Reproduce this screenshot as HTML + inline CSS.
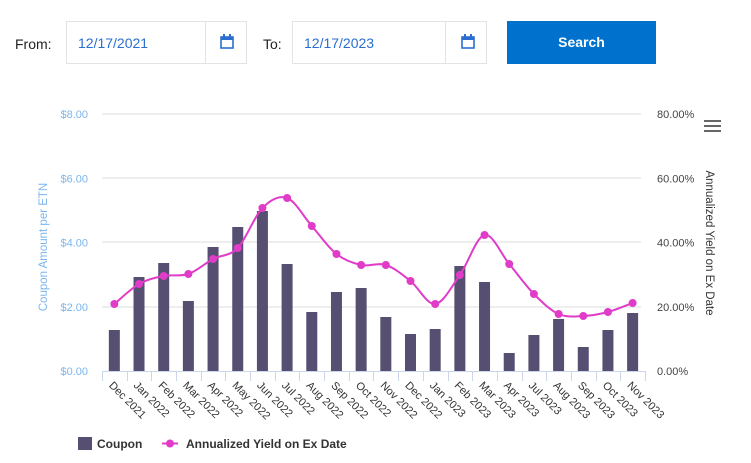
<!DOCTYPE html>
<html><head><meta charset="utf-8"><style>
body{margin:0;background:#fff;width:751px;height:463px;overflow:hidden;font-family:"Liberation Sans",sans-serif;position:relative}
.lbl{position:absolute;font-size:14px;color:#222;top:36px}
.box{position:absolute;top:21px;height:43px;border:1px solid #e3e3e3;box-sizing:border-box;background:#fff}
.box span{position:absolute;left:11px;top:13px;font-size:14px;color:#2a6fd0}
.cal{position:absolute;top:0;right:0;width:40px;height:41px;border-left:1px solid #e3e3e3}
.btn{position:absolute;left:507px;top:21px;width:149px;height:43px;background:#0072ce;color:#fff;font-weight:bold;font-size:14px;text-align:center;line-height:43px}
svg text{font-family:"Liberation Sans","DejaVu Sans",sans-serif}
</style></head><body>
<div class="lbl" style="left:15px">From:</div>
<div class="box" style="left:66px;width:181px"><span>12/17/2021</span><div class="cal"></div></div>
<div class="lbl" style="left:263px">To:</div>
<div class="box" style="left:292px;width:195px"><span>12/17/2023</span><div class="cal"></div></div>
<svg style="position:absolute;left:0;top:0" width="751" height="80">
<g fill="none" stroke="#2a6fd0" stroke-width="1.6"><rect x="221" y="37" width="12" height="11"/><rect x="462" y="37" width="12" height="11"/></g>
<g fill="#2a6fd0"><rect x="221" y="37" width="12" height="3"/><rect x="462" y="37" width="12" height="3"/><rect x="223" y="34" width="2" height="4"/><rect x="229" y="34" width="2" height="4"/><rect x="464" y="34" width="2" height="4"/><rect x="470" y="34" width="2" height="4"/></g>
</svg>
<div class="btn">Search</div>
<svg id="c" style="position:absolute;left:0;top:0" width="751" height="463"></svg>
<script>
var s='';
var L=102,W=24.68,T=114,B=371;
[114,178,242,307].forEach(function(y){s+='<line x1="'+L+'" x2="641" y1="'+y+'" y2="'+y+'" stroke="#dcdcdc"/>';});
var lv=['$8.00','$6.00','$4.00','$2.00','$0.00'],rv=['80.00%','60.00%','40.00%','20.00%','0.00%'];
for(var i=0;i<5;i++){var y=114+i*64.25;s+='<text x="88" y="'+(y+4)+'" font-size="11" fill="#7cb5ec" text-anchor="end">'+lv[i]+'</text>';s+='<text x="657" y="'+(y+4)+'" font-size="11" fill="#444">'+rv[i]+'</text>';}
s+='<text transform="translate(47,247) rotate(-90)" font-size="11.5" fill="#7cb5ec" text-anchor="middle">Coupon Amount per ETN</text>';
s+='<text transform="translate(706,243) rotate(90)" font-size="11.5" fill="#333" text-anchor="middle">Annualized Yield on Ex Date</text>';
s+='<g stroke="#666" stroke-width="2"><line x1="704" x2="721" y1="121" y2="121"/><line x1="704" x2="721" y1="126" y2="126"/><line x1="704" x2="721" y1="131" y2="131"/></g>';
var bt=[330,277,263,301,247,227,211,264,312,292,288,317,334,329,266,282,353,335,319,347,330,313];
var yp=[304,284,276,274,259,248,208,198,226,254,265,265,281,304,275,235,264,294,314,316,312,303];
var lab=['Dec 2021','Jan 2022','Feb 2022','Mar 2022','Apr 2022','May 2022','Jun 2022','Jul 2022','Aug 2022','Sep 2022','Oct 2022','Nov 2022','Dec 2022','Jan 2023','Feb 2023','Mar 2023','Apr 2023','Jul 2023','Aug 2023','Sep 2023','Oct 2023','Nov 2023'];
s+='<line x1="'+L+'" x2="645" y1="371.5" y2="371.5" stroke="#ccd6eb"/>';
for(var i=0;i<=22;i++){var x=Math.round(L+i*W)+.5;s+='<line x1="'+x+'" x2="'+x+'" y1="371" y2="381" stroke="#ccd6eb"/>';}
var px=[];
for(var i=0;i<22;i++){var cx=L+W*(i+.5);px.push(cx);s+='<rect x="'+(cx-5.5)+'" y="'+bt[i]+'" width="11" height="'+(371-bt[i])+'" fill="#564f72"/>';
s+='<text transform="translate('+(cx-6)+',386) rotate(45)" font-size="11" fill="#333">'+lab[i]+'</text>';}
var d='M'+px[0]+','+yp[0];
for(var i=0;i<21;i++){var p0=i?i-1:0,p3=i<20?i+2:21;
var c1x=px[i]+(px[i+1]-px[p0])/6,c1y=yp[i]+(yp[i+1]-yp[p0])/6,c2x=px[i+1]-(px[p3]-px[i])/6,c2y=yp[i+1]-(yp[p3]-yp[i])/6;
d+=' C'+c1x+','+c1y+' '+c2x+','+c2y+' '+px[i+1]+','+yp[i+1];}
s+='<path d="'+d+'" fill="none" stroke="#e03cc8" stroke-width="2"/>';
for(var i=0;i<22;i++)s+='<circle cx="'+px[i]+'" cy="'+yp[i]+'" r="4" fill="#e03cc8"/>';
s+='<rect x="78" y="437" width="14" height="13" fill="#564f72"/><text x="97" y="448" font-size="12" fill="#333" font-weight="bold">Coupon</text>';
s+='<line x1="162" x2="178" y1="443.5" y2="443.5" stroke="#e03cc8" stroke-width="2"/><circle cx="170" cy="443.5" r="4" fill="#e03cc8"/><text x="186" y="448" font-size="12" fill="#333" font-weight="bold">Annualized Yield on Ex Date</text>';
document.getElementById('c').innerHTML=s;
</script>
</body></html>
